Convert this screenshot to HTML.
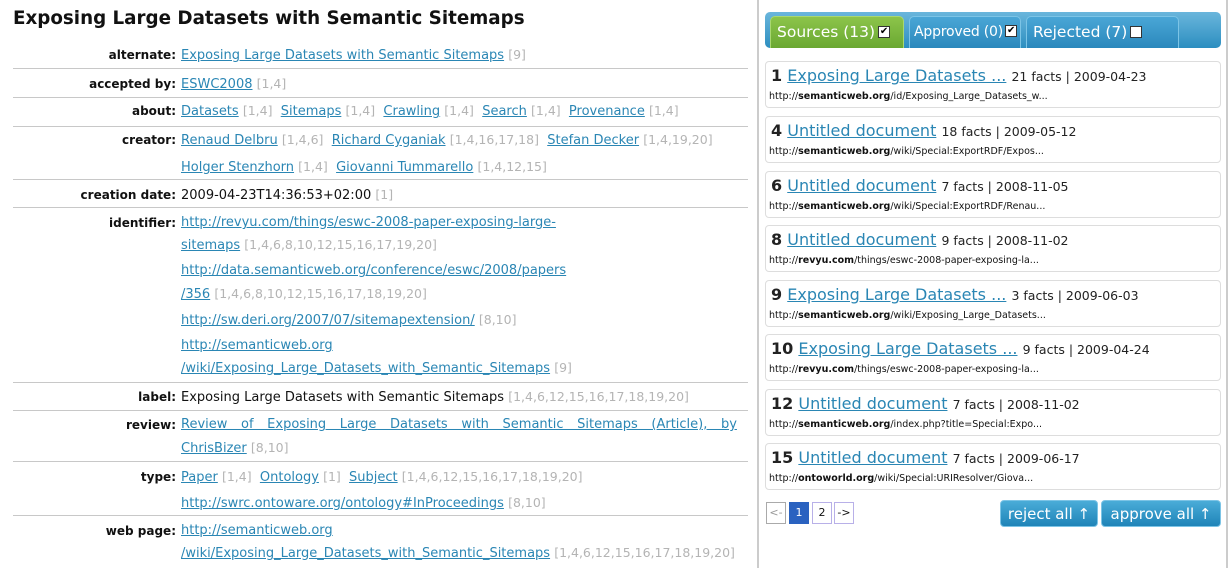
<!DOCTYPE html>
<html><head><meta charset="utf-8"><style>
*{margin:0;padding:0;box-sizing:border-box}
body{width:1231px;height:568px;overflow:hidden;background:#fff;font-family:"DejaVu Sans","Liberation Sans",sans-serif;position:relative;color:#111}
h1{position:absolute;left:13px;top:8px;font-size:18.3px;font-weight:bold;color:#111;white-space:nowrap}
.hr{position:absolute;left:13px;width:735px;height:1px;background:#c8c8c8}
.lb{position:absolute;right:1055px;font-weight:bold;font-size:12px;white-space:nowrap}
.v{position:absolute;left:181px;font-size:13px;white-space:nowrap;margin-top:-1px}
a{color:#2a86b4;text-decoration:underline}
.c{color:#b4b4b4;font-size:12.5px}
.panel{position:absolute;left:757px;top:0;width:471px;height:568px;border-left:2px solid #ccc;border-right:2px solid #ccc}
.tabbar{position:absolute;left:765px;top:12px;width:456px;height:36px;border-radius:5px;background:linear-gradient(#6ab6dc,#2c8ec0)}
.tab{position:absolute;top:16px;height:32px;border-radius:5px 5px 0 0;color:#fff;font-size:15.5px;padding:6px 0 0 6px;white-space:nowrap;background:linear-gradient(#4aa6d6,#2a88bc);border:1px solid #7cc4e6;border-bottom:none;overflow:hidden}
.cb{display:inline-block;width:12px;height:12px;background:#fff;border:1px solid #333;vertical-align:-1px;font-size:10px;line-height:10px;color:#000;text-align:center;margin-left:3px;overflow:hidden}
.item{position:absolute;left:765px;width:456px;height:47px;border:1px solid #ddd;border-radius:4px}
.t{position:absolute;left:5px;top:4px;font-size:16px;white-space:nowrap}
.t b{color:#222}
.t small{font-size:12.5px;color:#222}
.u{position:absolute;left:3px;top:29px;font-size:9.5px;white-space:nowrap;color:#111}
.pg{position:absolute;top:502px;width:20px;height:22px;border:1px solid #b8b0e8;font-size:11px;text-align:center;line-height:20px}
.btn{position:absolute;top:500px;height:27px;border-radius:4px;background:linear-gradient(#4aacd8,#1f84b8);color:#fff;font-size:15px;text-align:center;line-height:26px;border:1px solid #7cc4e6}
</style></head><body>
<h1>Exposing Large Datasets with Semantic Sitemaps</h1>

<div class="lb" style="top:48px">alternate:</div>
<div class="v" style="top:48px"><a>Exposing Large Datasets with Semantic Sitemaps</a> <span class="c">[9]</span></div>
<div class="hr" style="top:68px"></div>
<div class="lb" style="top:77px">accepted by:</div>
<div class="v" style="top:77px"><a>ESWC2008</a> <span class="c">[1,4]</span></div>
<div class="hr" style="top:97px"></div>
<div class="lb" style="top:104px">about:</div>
<div class="v" style="top:104px"><a>Datasets</a> <span class="c">[1,4]</span>&nbsp; <a>Sitemaps</a> <span class="c">[1,4]</span>&nbsp; <a>Crawling</a> <span class="c">[1,4]</span>&nbsp; <a>Search</a> <span class="c">[1,4]</span>&nbsp; <a>Provenance</a> <span class="c">[1,4]</span></div>
<div class="hr" style="top:126px"></div>
<div class="lb" style="top:133px">creator:</div>
<div class="v" style="top:133px"><a>Renaud Delbru</a> <span class="c">[1,4,6]</span>&nbsp; <a>Richard Cyganiak</a> <span class="c">[1,4,16,17,18]</span>&nbsp; <a>Stefan Decker</a> <span class="c">[1,4,19,20]</span></div>
<div class="v" style="top:160px"><a>Holger Stenzhorn</a> <span class="c">[1,4]</span>&nbsp; <a>Giovanni Tummarello</a> <span class="c">[1,4,12,15]</span></div>
<div class="hr" style="top:179px"></div>
<div class="lb" style="top:188px">creation date:</div>
<div class="v" style="top:188px">2009-04-23T14:36:53+02:00 <span class="c">[1]</span></div>
<div class="hr" style="top:207px"></div>
<div class="lb" style="top:216px">identifier:</div>
<div class="v" style="top:216px"><a>http://revyu.com/things/eswc-2008-paper-exposing-large-</a></div>
<div class="v" style="top:238px"><a>sitemaps</a> <span class="c">[1,4,6,8,10,12,15,16,17,19,20]</span></div>
<div class="v" style="top:264px"><a>http://data.semanticweb.org/conference/eswc/2008/papers</a></div>
<div class="v" style="top:287px"><a>/356</a> <span class="c">[1,4,6,8,10,12,15,16,17,18,19,20]</span></div>
<div class="v" style="top:313px"><a>http://sw.deri.org/2007/07/sitemapextension/</a> <span class="c">[8,10]</span></div>
<div class="v" style="top:339px"><a>http://semanticweb.org</a></div>
<div class="v" style="top:361px"><a>/wiki/Exposing_Large_Datasets_with_Semantic_Sitemaps</a> <span class="c">[9]</span></div>
<div class="hr" style="top:382px"></div>
<div class="lb" style="top:390px">label:</div>
<div class="v" style="top:390px">Exposing Large Datasets with Semantic Sitemaps <span class="c">[1,4,6,12,15,16,17,18,19,20]</span></div>
<div class="hr" style="top:410px"></div>
<div class="lb" style="top:418px">review:</div>
<div class="v" style="top:418px;word-spacing:9.5px"><a>Review of Exposing Large Datasets with Semantic Sitemaps (Article), by</a></div>
<div class="v" style="top:441px"><a>ChrisBizer</a> <span class="c">[8,10]</span></div>
<div class="hr" style="top:461px"></div>
<div class="lb" style="top:470px">type:</div>
<div class="v" style="top:470px"><a>Paper</a> <span class="c">[1,4]</span>&nbsp; <a>Ontology</a> <span class="c">[1]</span>&nbsp; <a>Subject</a> <span class="c">[1,4,6,12,15,16,17,18,19,20]</span></div>
<div class="v" style="top:496px"><a>http://swrc.ontoware.org/ontology#InProceedings</a> <span class="c">[8,10]</span></div>
<div class="hr" style="top:515px"></div>
<div class="lb" style="top:524px">web page:</div>
<div class="v" style="top:524px"><a>http://semanticweb.org</a></div>
<div class="v" style="top:546px;width:576px;overflow:hidden"><a>/wiki/Exposing_Large_Datasets_with_Semantic_Sitemaps</a> <span class="c">[1,4,6,12,15,16,17,18,19,20]</span></div>

<div class="panel"></div>
<div class="tabbar"></div>
<div class="tab" style="left:770px;width:134px;background:linear-gradient(#8cc44a,#6aa832);border-color:#a8d870">Sources (13)<span class="cb">✔</span></div>
<div class="tab" style="left:909px;width:112px;font-size:14px;padding-left:4px;padding-top:7px;letter-spacing:-0.2px">Approved (0)<span class="cb" style="margin-left:2px">✔</span></div>
<div class="tab" style="left:1026px;width:153px">Rejected (7)<span class="cb"></span></div>

<div class="item" style="top:61px"><div class="t"><b>1</b> <a>Exposing Large Datasets ...</a> <small>21 facts | 2009-04-23</small></div><div class="u">http://<b>semanticweb.org</b>/id/Exposing_Large_Datasets_w...</div></div>
<div class="item" style="top:116px"><div class="t"><b>4</b> <a>Untitled document</a> <small>18 facts | 2009-05-12</small></div><div class="u">http://<b>semanticweb.org</b>/wiki/Special:ExportRDF/Expos...</div></div>
<div class="item" style="top:171px"><div class="t"><b>6</b> <a>Untitled document</a> <small>7 facts | 2008-11-05</small></div><div class="u">http://<b>semanticweb.org</b>/wiki/Special:ExportRDF/Renau...</div></div>
<div class="item" style="top:225px"><div class="t"><b>8</b> <a>Untitled document</a> <small>9 facts | 2008-11-02</small></div><div class="u">http://<b>revyu.com</b>/things/eswc-2008-paper-exposing-la...</div></div>
<div class="item" style="top:280px"><div class="t"><b>9</b> <a>Exposing Large Datasets ...</a> <small>3 facts | 2009-06-03</small></div><div class="u">http://<b>semanticweb.org</b>/wiki/Exposing_Large_Datasets...</div></div>
<div class="item" style="top:334px"><div class="t"><b>10</b> <a>Exposing Large Datasets ...</a> <small>9 facts | 2009-04-24</small></div><div class="u">http://<b>revyu.com</b>/things/eswc-2008-paper-exposing-la...</div></div>
<div class="item" style="top:389px"><div class="t"><b>12</b> <a>Untitled document</a> <small>7 facts | 2008-11-02</small></div><div class="u">http://<b>semanticweb.org</b>/index.php?title=Special:Expo...</div></div>
<div class="item" style="top:443px"><div class="t"><b>15</b> <a>Untitled document</a> <small>7 facts | 2009-06-17</small></div><div class="u">http://<b>ontoworld.org</b>/wiki/Special:URIResolver/Giova...</div></div>

<div class="pg" style="left:766px;border-color:#aaa;color:#999">&lt;-</div>
<div class="pg" style="left:789px;background:#2a62c0;color:#fff;border-color:#2a62c0">1</div>
<div class="pg" style="left:812px">2</div>
<div class="pg" style="left:834px">-&gt;</div>
<div class="btn" style="left:1000px;width:98px">reject all ↑</div>
<div class="btn" style="left:1101px;width:120px">approve all ↑</div>
</body></html>
